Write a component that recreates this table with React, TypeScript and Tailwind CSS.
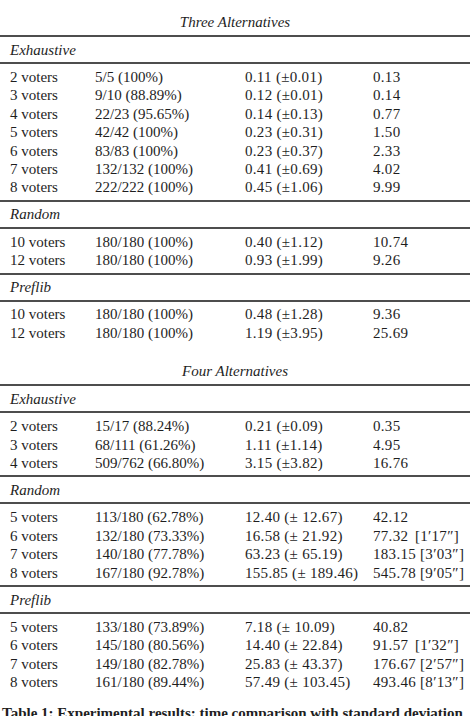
type Row = [string, string, string, string, string?];

interface Block {
  name: string;
  rows: Row[];
}

interface Part {
  title: string;
  blocks: Block[];
}

const parts: Part[] = [
  {
    title: 'Three Alternatives',
    blocks: [
      {
        name: 'Exhaustive',
        rows: [
          ['2 voters', '5/5 (100%)', '0.11 (\u00b10.01)', '0.13'],
          ['3 voters', '9/10 (88.89%)', '0.12 (\u00b10.01)', '0.14'],
          ['4 voters', '22/23 (95.65%)', '0.14 (\u00b10.13)', '0.77'],
          ['5 voters', '42/42 (100%)', '0.23 (\u00b10.31)', '1.50'],
          ['6 voters', '83/83 (100%)', '0.23 (\u00b10.37)', '2.33'],
          ['7 voters', '132/132 (100%)', '0.41 (\u00b10.69)', '4.02'],
          ['8 voters', '222/222 (100%)', '0.45 (\u00b11.06)', '9.99'],
        ],
      },
      {
        name: 'Random',
        rows: [
          ['10 voters', '180/180 (100%)', '0.40 (\u00b11.12)', '10.74'],
          ['12 voters', '180/180 (100%)', '0.93 (\u00b11.99)', '9.26'],
        ],
      },
      {
        name: 'Preflib',
        rows: [
          ['10 voters', '180/180 (100%)', '0.48 (\u00b11.28)', '9.36'],
          ['12 voters', '180/180 (100%)', '1.19 (\u00b13.95)', '25.69'],
        ],
      },
    ],
  },
  {
    title: 'Four Alternatives',
    blocks: [
      {
        name: 'Exhaustive',
        rows: [
          ['2 voters', '15/17 (88.24%)', '0.21 (\u00b10.09)', '0.35'],
          ['3 voters', '68/111 (61.26%)', '1.11 (\u00b11.14)', '4.95'],
          ['4 voters', '509/762 (66.80%)', '3.15 (\u00b13.82)', '16.76'],
        ],
      },
      {
        name: 'Random',
        rows: [
          ['5 voters', '113/180 (62.78%)', '12.40 (\u00b1 12.67)', '42.12'],
          ['6 voters', '132/180 (73.33%)', '16.58 (\u00b1 21.92)', '77.32', '[1\u203217\u2033]'],
          ['7 voters', '140/180 (77.78%)', '63.23 (\u00b1 65.19)', '183.15', '[3\u203203\u2033]'],
          ['8 voters', '167/180 (92.78%)', '155.85 (\u00b1 189.46)', '545.78', '[9\u203205\u2033]'],
        ],
      },
      {
        name: 'Preflib',
        rows: [
          ['5 voters', '133/180 (73.89%)', '7.18 (\u00b1 10.09)', '40.82'],
          ['6 voters', '145/180 (80.56%)', '14.40 (\u00b1 22.84)', '91.57', '[1\u203232\u2033]'],
          ['7 voters', '149/180 (82.78%)', '25.83 (\u00b1 43.37)', '176.67', '[2\u203257\u2033]'],
          ['8 voters', '161/180 (89.44%)', '57.49 (\u00b1 103.45)', '493.46', '[8\u203213\u2033]'],
        ],
      },
    ],
  },
];

function Rule() {
  return <div className="h-[2px] w-[470px] bg-[#4d4d4d]" />;
}

function DataRow({ row }: { row: Row }) {
  const [label, solved, time, total, clock] = row;
  return (
    <div className="flex h-[18.4px] items-center whitespace-nowrap">
      <span className="w-[95px] pl-[10px]">{label}</span>
      <span className="w-[150px]">{solved}</span>
      <span className="w-[128px] tracking-[0.3px]">{time}</span>
      <span className="flex w-[86px] justify-between gap-[4px] tracking-[0.3px]">
        <span>{total}</span>
        {clock && <span>{clock}</span>}
      </span>
    </div>
  );
}

export default function App() {
  return (
    <div
      className="h-[716px] w-[474px] overflow-hidden bg-white text-[15px] text-[#1e1e1e]"
      style={{ fontFamily: '"Liberation Serif", "Times New Roman", serif' }}
    >
      {parts.map((part, i) => (
        <div key={part.title} className={i === 0 ? 'pt-[12px]' : 'pt-[16px]'}>
          <div className="mb-[3px] flex h-[20px] w-[470px] items-center justify-center italic">
            {part.title}
          </div>
          {part.blocks.map((block) => (
            <div key={block.name}>
              <Rule />
              <div className="flex h-[25px] items-center pl-[10px] pt-[1px] italic">{block.name}</div>
              <Rule />
              <div className="pb-[3px] pt-[4px]">
                {block.rows.map((row) => (
                  <DataRow key={row[0]} row={row} />
                ))}
              </div>
            </div>
          ))}
        </div>
      ))}
      <div className="mt-[7px] whitespace-nowrap pl-[2px] text-[15px] font-bold">
        Table 1: Experimental results: time comparison with standard deviation
      </div>
    </div>
  );
}
